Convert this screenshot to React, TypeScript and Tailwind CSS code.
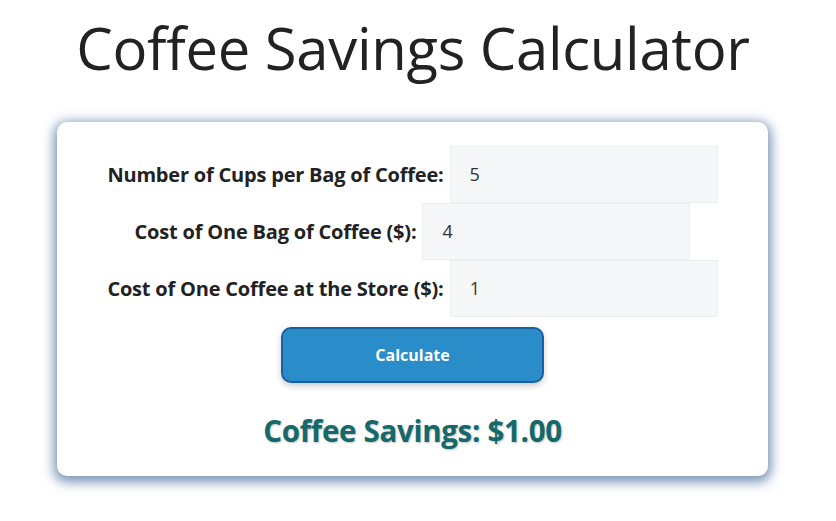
import React from "react";

const rows = [
  { label: "Number of Cups per Bag of Coffee:", value: "5" },
  { label: "Cost of One Bag of Coffee ($):", value: "4" },
  { label: "Cost of One Coffee at the Store ($):", value: "1" },
];

export default function App() {
  return (
    <div className="w-[836px] h-[521px] bg-white overflow-hidden" style={{ fontFamily: '"Open Sans", "Noto Sans", sans-serif' }}>
      <h1 className="text-center text-[58px] leading-[68px] pt-[14px] pr-[10px] text-[#222] font-normal tracking-[-0.3px]">
        Coffee Savings Calculator
      </h1>
      <div className="mx-[57px] mt-[40px] w-[711px] h-[354px] bg-white rounded-[10px] shadow-[0_3px_12px_3px_rgba(60,100,150,0.7)] pt-[24px] flex flex-col items-center">
        {rows.map((r) => (
          <div key={r.label} className="flex items-center gap-[6px] h-[57px]">
            <label className="text-[20px] font-bold text-[#222] tracking-[-0.2px]">{r.label}</label>
            <div className="w-[268px] h-[57px] bg-[#f6f7f9] border border-[#eceef1] flex items-center pl-[19px] text-[18px] text-[#333]">
              {r.value}
            </div>
          </div>
        ))}
        <button className="mt-[10px] w-[263px] h-[56px] bg-[#2a8cc8] border-2 border-[#1b5fa3] rounded-[10px] text-white font-bold text-[16px] shadow-[0_3px_6px_rgba(0,0,0,0.2)]">
          Calculate
        </button>
        <div className="mt-[26px] text-[29.5px] font-bold text-[#15696b] tracking-[-0.3px] [text-shadow:1px_1px_2px_rgba(0,0,0,0.25)]">
          Coffee Savings: $1.00
        </div>
      </div>
    </div>
  );
}
